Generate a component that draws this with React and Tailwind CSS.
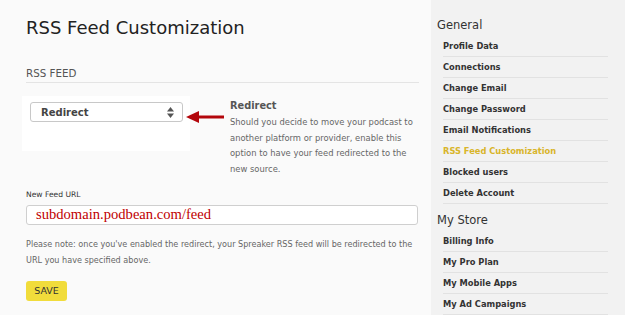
const FONT = { fontFamily: '"DejaVu Sans", Verdana, sans-serif' }

const GENERAL = [
  'Profile Data',
  'Connections',
  'Change Email',
  'Change Password',
  'Email Notifications',
  'RSS Feed Customization',
  'Blocked users',
  'Delete Account',
]

const STORE = ['Billing Info', 'My Pro Plan', 'My Mobile Apps', 'My Ad Campaigns']

function NavItem({ label, active }) {
  return (
    <li className="h-[21px] flex items-center border-b border-[#e2e2e2]">
      <span className={`text-[8.3px] font-bold ${active ? 'text-[#d9b52a]' : 'text-[#333]'}`}>
        {label}
      </span>
    </li>
  )
}

function RedArrow() {
  return (
    <svg width="38" height="14" viewBox="0 0 38 14" className="shrink-0">
      <polygon points="0,7 13,1 13,13" fill="#b3060b" />
      <rect x="12" y="5.5" width="26" height="3" fill="#b3060b" />
    </svg>
  )
}

export default function App() {
  return (
    <div className="w-[625px] h-[315px] flex overflow-hidden text-[#333]" style={FONT}>
      <main className="w-[431px] bg-[#fafafa] pl-[26px] pr-[12px]">
        <h1 className="pt-[16px] text-[18px] leading-[24px] text-[#222]">RSS Feed Customization</h1>

        <h2 className="mt-[26px] text-[10.3px] leading-[14px] text-[#555] pb-[2px] border-b border-[#e4e4e4]">
          RSS FEED
        </h2>

        <div className="flex mt-[13px]">
          <div className="w-[168px] -ml-[4px] h-[55px] bg-white flex items-start pt-[6px] pl-[8px] shrink-0">
            <div className="w-[153px] h-[20px] border border-[#c8c8c8] rounded-[3px] bg-white flex items-center justify-between pl-[10px] pr-[8px]">
              <span className="text-[10px] font-bold text-[#444]">Redirect</span>
              <svg width="7" height="11" viewBox="0 0 7 11">
                <polygon points="3.5,0 7,4.5 0,4.5" fill="#555" />
                <polygon points="0,6.5 7,6.5 3.5,11" fill="#555" />
              </svg>
            </div>
          </div>
          <div className="mt-[14px] -ml-[4px]">
            <RedArrow />
          </div>
          <div className="ml-[6px] pt-[3px]">
            <div className="text-[9.8px] font-bold text-[#555] leading-[14px]">Redirect</div>
            <p className="text-[8.4px] leading-[15.5px] text-[#666] mt-[2px]">
              Should you decide to move your podcast to another platform or provider, enable this
              option to have your feed redirected to the new source.
            </p>
          </div>
        </div>

        <div className="mt-[12px] text-[7.6px] text-[#333] leading-[12px]">New Feed URL</div>
        <div className="mt-[4px] w-[392px] h-[20px] bg-white border border-[#cfcfcf] rounded-[3px] flex items-center px-[9px]">
          <span
            className="text-[14.6px] text-[#c00000]"
            style={{ fontFamily: '"Liberation Serif", "Times New Roman", serif' }}
          >
            subdomain.podbean.com/feed
          </span>
        </div>

        <p className="mt-[12px] text-[8.1px] leading-[15.5px] text-[#666] w-[392px]">
          Please note: once you've enabled the redirect, your Spreaker RSS feed will be redirected to
          the URL you have specified above.
        </p>

        <button className="mt-[13px] w-[41px] h-[20px] bg-[#f1dc3b] rounded-[3px] text-[9.5px] text-[#333] flex items-center justify-center">
          SAVE
        </button>
      </main>

      <aside className="flex-1 bg-[#f2f2f2] pl-[6px] pr-[17px]">
        <div className="pt-[16px] text-[11.5px] leading-[18px] text-[#333]">General</div>
        <ul className="pl-[6px] mt-[2px]">
          {GENERAL.map(l => (
            <NavItem key={l} label={l} active={l === 'RSS Feed Customization'} />
          ))}
        </ul>
        <div className="mt-[7px] text-[11.5px] leading-[18px] text-[#333]">My Store</div>
        <ul className="pl-[6px] mt-[2px]">
          {STORE.map(l => (
            <NavItem key={l} label={l} />
          ))}
        </ul>
      </aside>
    </div>
  )
}
